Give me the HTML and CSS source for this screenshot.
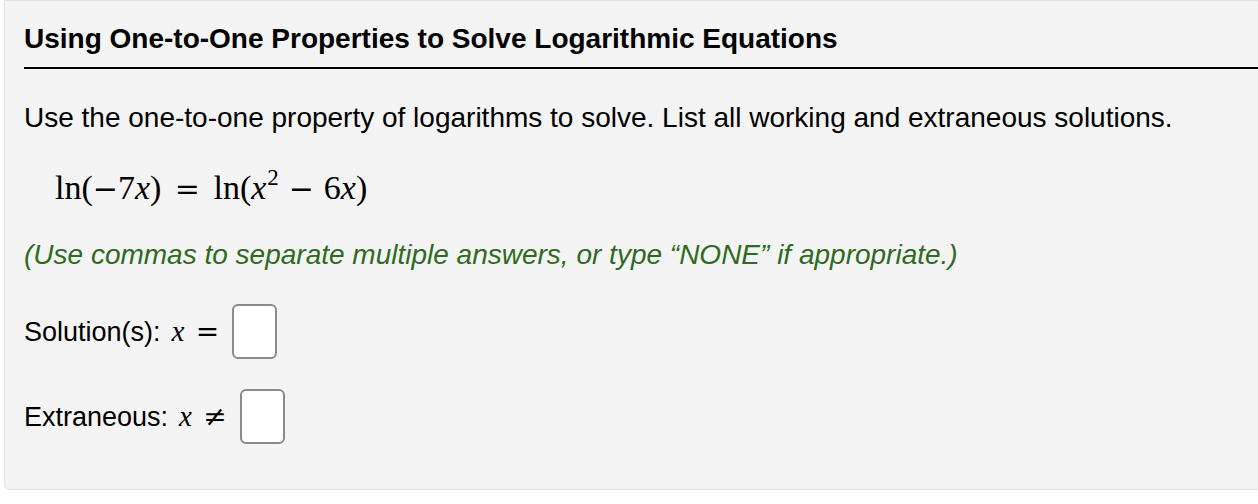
FILE: index.html
```html
<!DOCTYPE html>
<html>
<head>
<meta charset="utf-8">
<link rel="stylesheet" href="styles.css">
</head>
<body>
<div class="panel">
  <h1 class="title">Using One-to-One Properties to Solve Logarithmic Equations</h1>
  <p class="prompt">Use the one-to-one property of logarithms to solve. List all working and extraneous solutions.</p>
  <div class="equation"><span class="fn">ln</span>(<span class="op unary">−</span>7<i>x</i>)<span class="op rel">=</span><span class="fn">ln</span>(<i>x</i><sup>2</sup><span class="op bin">−</span>6<i>x</i>)</div>
  <p class="hint">(Use commas to separate multiple answers, or type “NONE” if appropriate.)</p>
  <div class="answer">
    <span class="label">Solution(s):</span>
    <span class="math"><i>x</i><span class="op rel">=</span></span>
    <span class="box"></span>
  </div>
  <div class="answer">
    <span class="label">Extraneous:</span>
    <span class="math"><i>x</i><span class="op rel">≠</span></span>
    <span class="box"></span>
  </div>
</div>
</body>
</html>
```
FILE: styles.css
```css
html, body {
  margin: 0;
  padding: 0;
  background: #ffffff;
}
body {
  font-family: "Liberation Sans", Arial, sans-serif;
  color: #000;
}
.panel {
  margin-left: 4px;
  height: 490px;
  box-sizing: border-box;
  background: #f4f4f4;
  border: 1px solid #e2e2e2;
  border-right: none;
  border-radius: 0 0 0 6px;
  padding: 0 0 0 19px;
}
.title {
  margin: 0;
  padding: 22px 0 12px 0;
  font-size: 28px;
  line-height: 32px;
  font-weight: bold;
  border-bottom: 2px solid #000;
}
.prompt {
  margin: 33px 0 0 0;
  font-size: 28px;
  line-height: 32px;
}
.equation {
  margin: 34px 0 0 31px;
  font-family: "Liberation Serif", "DejaVu Serif", serif;
  font-size: 34px;
  line-height: 40px;
}
.equation i, .math i {
  font-family: "Liberation Serif", serif;
  font-style: italic;
}
.op {
  font-family: "DejaVu Serif", serif;
  font-weight: 300;
}
.equation .op {
  font-size: 30px;
}
.equation sup {
  font-size: 23px;
  line-height: 0;
  vertical-align: 14px;
  margin-left: 1px;
}
.equation .rel {
  margin: 0 0.45em;
}
.equation .bin {
  margin: 0 0.33em;
}
.hint {
  margin: 30px 0 0 0;
  font-size: 28px;
  line-height: 32px;
  font-style: italic;
  color: #2e6b1e;
}
.answer {
  display: flex;
  align-items: center;
  margin-top: 33px;
  font-size: 27px;
  line-height: 32px;
}
.answer + .answer {
  margin-top: 30px;
}
.label {
  margin-right: 11px;
}
.math {
  font-family: "Liberation Serif", serif;
  font-size: 29px;
  margin-right: 2px;
}
.math .op {
  font-size: 28px;
}
.math .rel {
  margin: 0 0.4em;
}
.box {
  width: 41px;
  height: 51px;
  background: #fff;
  border: 2px solid #8a8a8a;
  border-radius: 6px;
}
```
